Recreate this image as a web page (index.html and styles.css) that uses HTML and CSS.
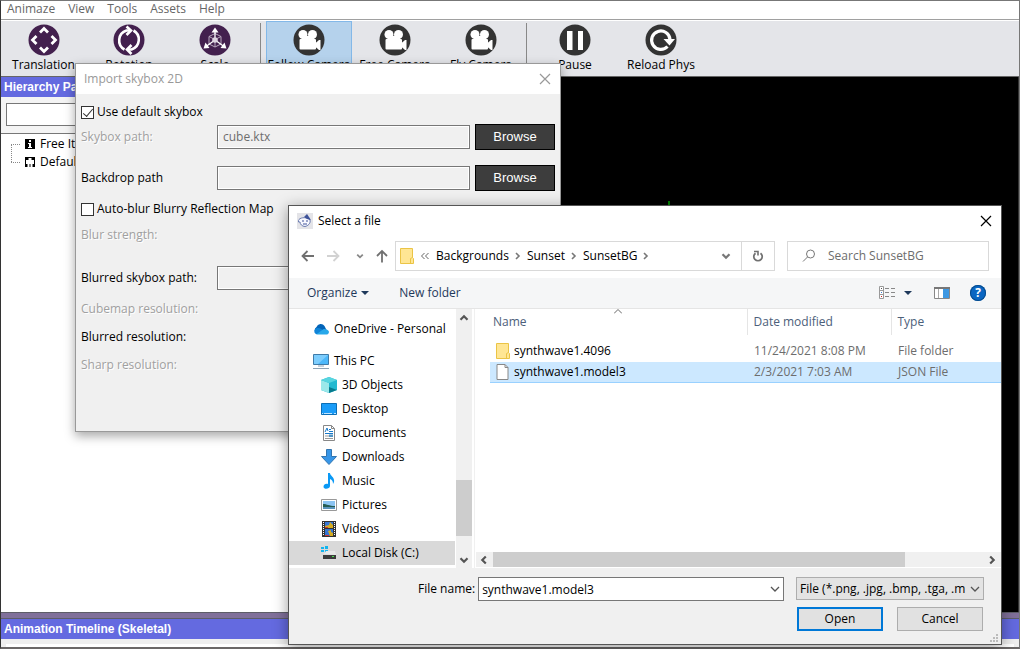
FILE: index.html
```html
<!DOCTYPE html>
<html lang="en">
<head>
<meta charset="utf-8">
<title>Animaze Editor</title>
<link rel="stylesheet" href="styles.css">
</head>
<body>
<svg class="defs" aria-hidden="true">
  <symbol id="camera" viewBox="0 0 32 32">
    <circle cx="16" cy="16" r="15.500" fill="#333"/>
    <circle cx="10" cy="10.500" r="4.500" fill="#fff"/><circle cx="19.500" cy="10.500" r="4.500" fill="#fff"/>
    <path d="M9 12h12v5H9z" fill="#fff"/><rect x="6.500" y="15" width="16.500" height="10.500" rx="1" fill="#fff"/>
    <path d="M22 19.500l4-3.500h1.500v10H26l-4-3.500z" fill="#fff"/>
  </symbol>
  <symbol id="folder" viewBox="0 0 14 18">
    <path d="M.5 1.500h12v9l1 1v5H.5z" fill="#ffe694" stroke="#ebc445"/><path d="M10.500 16.500v-5l2-1" fill="none" stroke="#ebc445"/>
  </symbol>
  <symbol id="chev-down" viewBox="0 0 10 10"><path d="M1 3l4 4 4-4" fill="none" stroke="currentColor" stroke-width="1.300"/></symbol>
  <symbol id="chev-bold" viewBox="0 0 10 10"><path d="M1.500 3.200l3.500 3.500 3.500-3.500" fill="none" stroke="currentColor" stroke-width="2.200"/></symbol>
  <symbol id="cross" viewBox="0 0 12 12"><path d="M1 1l10 10M11 1L1 11" fill="none" stroke="currentColor" stroke-width="1.200"/></symbol>
</svg>

<div class="app">
  <nav class="menubar">
    <button>Animaze</button><button>View</button><button>Tools</button><button>Assets</button><button>Help</button>
  </nav>
  <div class="toolbar">
    <button class="tool"><svg viewBox="0 0 32 32"><circle cx="16" cy="16" r="15.500" fill="#43204e"/><g fill="none" stroke="#fff" stroke-width="2.800"><path d="M12 8.500l4-4 4 4M12 23.500l4 4 4-4M8.500 12l-4 4 4 4M23.500 12l4 4-4 4"/></g></svg>Translation</button>
    <button class="tool"><svg viewBox="0 0 32 32"><circle cx="16" cy="16" r="15.500" fill="#43204e"/><g fill="none" stroke="#fff" stroke-width="2.600"><path d="M11.500 25.500A10.400 10.400 0 0 1 13.500 6.500h4M20.500 6.500A10.400 10.400 0 0 1 18.500 25.500h-4"/><path d="M13.500 2.500L18 6.500l-4.500 4.500M18.500 21L14 25.500l4.500 4.500"/></g></svg>Rotation</button>
    <button class="tool"><svg viewBox="0 0 32 32"><circle cx="16" cy="16" r="15.500" fill="#43204e"/><g fill="none" stroke="#b9a8be" stroke-width="1"><path d="M10 12.500l6-3 6 3v7.500l-6 3-6-3zM10 12.500l6 3 6-3M16 15v8"/></g><path d="M16 16V6M16 16L7 22.500M16 16l9 6.500" stroke="#fff" stroke-width="1.300"/><path d="M16 3.500l3.500 5h-7zM4.500 24.500l2-6 4 5.500zM27.500 24.500l-2-6-4 5.500z" fill="#fff"/><circle cx="16" cy="16" r="2.800" fill="#ddd3e0"/></svg>Scale</button>
    <span class="sep"></span>
    <button class="tool active"><svg><use href="#camera"/></svg>Follow Camera</button>
    <button class="tool"><svg><use href="#camera"/></svg>Free Camera</button>
    <button class="tool"><svg><use href="#camera"/></svg>Fly Camera</button>
    <span class="sep"></span>
    <button class="tool"><svg viewBox="0 0 32 32"><circle cx="16" cy="16" r="15.500" fill="#333"/><path d="M8 7h5.500v19H8zM19 7h5v19h-5z" fill="#fff"/></svg>Pause</button>
    <button class="tool"><svg viewBox="0 0 32 32"><circle cx="16" cy="16" r="15.500" fill="#333"/><path d="M22.500 22.500a9.200 9.200 0 1 1 2.500-7" fill="none" stroke="#fff" stroke-width="3.200"/><path d="M18.500 15h11.500l-5.500 6.500z" fill="#fff"/></svg>Reload Phys</button>
  </div>
  <div class="workspace">
    <section class="hierarchy">
      <h2 class="panel-title">Hierarchy Panel</h2>
      <div class="filter"><input type="text" aria-label="Filter hierarchy"></div>
      <ul class="tree">
        <li><svg viewBox="0 0 10 10"><path d="M0 0h10v10H0z"/><path d="M4 1h2v2H4zM3 4h3v4h1v1H3V8h1V5H3z" fill="#fff"/></svg>Free Items</li>
        <li><svg viewBox="0 0 10 10"><path d="M0 0h10v10H0z"/><path d="M3.500 1h3v2H9v4H7.500v3h-2V7h-1v3h-2V7H1V3h2.500z" fill="#fff"/></svg>Default</li>
      </ul>
    </section>
    <div class="viewport"><span class="axis"></span></div>
  </div>
  <div class="splitter"></div>
  <h2 class="panel-title">Animation Timeline (Skeletal)</h2>
  <div class="timeline"></div>
</div>

<section class="window import" aria-labelledby="import-title">
  <header class="titlebar"><span id="import-title">Import skybox 2D</span><button class="close" aria-label="Close"><svg><use href="#cross"/></svg></button></header>
  <form class="import-form">
    <label class="check"><input type="checkbox" checked>Use default skybox</label>
    <div class="field path"><label class="off" for="skybox">Skybox path:</label><input id="skybox" type="text" value="cube.ktx" readonly><button type="button">Browse</button></div>
    <div class="field path second"><label for="backdrop">Backdrop path</label><input id="backdrop" type="text" readonly><button type="button">Browse</button></div>
    <label class="check"><input type="checkbox">Auto-blur Blurry Reflection Map</label>
    <div class="field off blur">Blur strength:</div>
    <div class="field path"><label for="blurred">Blurred skybox path:</label><input id="blurred" type="text" readonly><button type="button">Browse</button></div>
    <div class="field off res">Cubemap resolution:</div>
    <div class="field res">Blurred resolution:</div>
    <div class="field off res">Sharp resolution:</div>
  </form>
</section>

<section class="window picker" aria-labelledby="picker-title">
  <header class="picker-title">
    <svg class="appicon" viewBox="0 0 16 16"><path d="M0 0h16v16H0z" fill="#e4e4e8"/><path d="M2 6.500C4 4 11 4 13 7c1 3-2 6-5 6.500C5 13.500 3 11 3 9H1.500V7.500z" fill="#f8f8ff" stroke="#6b7cb0"/><path d="M7 4l3-3 2 3 2 3-4-1z" fill="#3e5399"/><path d="M5 8h2M9 8h2M6 11h4" stroke="#3e5399"/></svg>
    <span id="picker-title">Select a file</span>
    <button class="close" aria-label="Close"><svg><use href="#cross"/></svg></button>
  </header>
  <div class="addressbar">
    <div class="arrows">
      <button aria-label="Back"><svg viewBox="0 0 14 12"><path d="M13 6H2M6.500 1L1.500 6l5 5" fill="none" stroke="#707070" stroke-width="1.800"/></svg></button>
      <button aria-label="Forward"><svg viewBox="0 0 14 12"><path d="M1 6h11M7.500 1l5 5-5 5" fill="none" stroke="#d2d2d2" stroke-width="1.800"/></svg></button>
      <button class="recent" aria-label="Recent locations"><svg><use href="#chev-bold"/></svg></button>
      <button aria-label="Up"><svg viewBox="0 0 14 14"><path d="M7 13.500V2M2 7l5-5 5 5" fill="none" stroke="#707070" stroke-width="1.800"/></svg></button>
    </div>
    <div class="crumbs">
      <svg class="folder"><use href="#folder"/></svg>
      <svg class="more" viewBox="0 0 10 8"><path d="M4.500 1L1.500 4l3 3M8.500 1l-3 3 3 3" fill="none" stroke="#666"/></svg>
      <button>Backgrounds</button><svg class="gt" viewBox="0 0 6 8"><path d="M1 1l3 3-3 3" fill="none" stroke="#777" stroke-width="1.600"/></svg>
      <button>Sunset</button><svg class="gt" viewBox="0 0 6 8"><path d="M1 1l3 3-3 3" fill="none" stroke="#777" stroke-width="1.600"/></svg>
      <button>SunsetBG</button><svg class="gt" viewBox="0 0 6 8"><path d="M1 1l3 3-3 3" fill="none" stroke="#777" stroke-width="1.600"/></svg>
      <button class="drop" aria-label="Previous locations"><svg><use href="#chev-bold"/></svg></button>
      <button class="refresh" aria-label="Refresh"><svg viewBox="0 0 12 12"><path d="M8.500 3.200a4.200 4.200 0 1 1-5 0" fill="none" stroke="#707070" stroke-width="1.700"/><path d="M2 1.500h4v4" fill="none" stroke="#707070" stroke-width="1.600"/></svg></button>
    </div>
    <label class="search"><svg viewBox="0 0 14 14"><circle cx="8.500" cy="5" r="4" fill="none" stroke="#777"/><path d="M5.500 8L1 12.500" stroke="#777"/></svg><input type="text" placeholder="Search SunsetBG" aria-label="Search SunsetBG"></label>
  </div>
  <div class="commands">
    <button>Organize <svg class="tri" viewBox="0 0 8 4"><path d="M0 0h8L4 4z" fill="#1e395b"/></svg></button>
    <button>New folder</button>
    <button class="view" aria-label="Change view"><svg class="listicon" viewBox="0 0 17 14"><path d="M.5.500h4v12h-4zM.5 4.500h4M.5 8.500h4" fill="#fff" stroke="#999"/><path d="M2 2h1v1H2z" fill="#555"/><path d="M2 6h1v1H2z" fill="#3a7bd5"/><path d="M2 10h1v1H2z" fill="#c22"/><path d="M6 2.500h4M12 2.500h4M6 6.500h4M12 6.500h4M6 10.500h4M12 10.500h4" stroke="#888"/></svg><svg class="tri" viewBox="0 0 8 4"><path d="M0 0h8L4 4z" fill="#1e395b"/></svg></button>
    <button class="pane" aria-label="Preview pane"><svg viewBox="0 0 16 12"><path d="M.5.500h15v11H.5z" fill="#fff" stroke="#888"/><path d="M0 0h16v2H0z" fill="#777"/><path d="M4.500 2v9" stroke="#aaa"/><path d="M9 2h6v9H9z" fill="#3d98e3"/></svg></button>
    <button class="help" aria-label="Help">?</button>
  </div>
  <div class="browser">
    <ul class="places">
      <li class="root"><svg viewBox="0 0 16 16"><path d="M4 13a4 4 0 0 1-.5-7A4.500 4.500 0 0 1 11.500 5l2 4z" fill="#0364b8"/><path d="M3 13a3.200 3.200 0 0 1 1-6c3-.5 6 2 8 3l-2 3z" fill="#1084d8"/><path d="M3 13.500l7-5c1-1 5-.5 6 2.200 0 2-1.500 2.800-3 2.800z" fill="#28a8ea"/></svg>OneDrive - Personal</li>
      <li class="root"><svg viewBox="0 0 16 16"><path d="M.5 1.500h15v10H.5z" fill="#4db8fa" stroke="#3f7ba8"/><path d="M1 2h14L5 11H1z" fill="#7dcdfd"/><path d="M5 13h6M0 15.500h16" stroke="#8ea3b5"/></svg>This PC</li>
      <li><svg viewBox="0 0 16 16"><path d="M0 3l8-3 8 3v10l-8 3-8-3z" fill="#22b9d0"/><path d="M0 3l8 3v10l-8-3z" fill="#9be8ea"/><path d="M0 3l8-3 8 3-8 3z" fill="#58d5df"/><path d="M8 10l8 3-8 3z" fill="#077b8e"/></svg>3D Objects</li>
      <li><svg viewBox="0 0 16 16"><path d="M.5 2.500h15v11H.5z" fill="#1a9cf8" stroke="#0d6fb5"/><path d="M1 12.500h1M3 12.500h8M13 12.500h2" stroke="#bfe4ff"/></svg>Desktop</li>
      <li><svg viewBox="0 0 16 16"><path d="M2.500.500h8l3 3v12h-11z" fill="#fff" stroke="#888"/><path d="M10.500.500v3h3" fill="none" stroke="#888"/><path d="M4 7l2-4 1 3M8 4.500h2M8 6.500h4M4 8.500h8" fill="none" stroke="#1979c9"/><path d="M4 11h4M4 13.500h8" stroke="#999"/><path d="M8 9.500h4V12H8z" fill="#5395c4"/></svg>Documents</li>
      <li><svg viewBox="0 0 16 16"><path d="M5.500.500h5v7h5L8 15.500.5 7.500h5z" fill="#3796e8" stroke="#3275b0"/></svg>Downloads</li>
      <li><svg viewBox="0 0 16 16"><path d="M7 0h2c0 3 5 4 4 9l-1 2c0-3-1-4-3-5v7c0 3-6 4-6.500 1C2.500 11 5 10.500 7 11z" fill="#0a99f5"/></svg>Music</li>
      <li><svg viewBox="0 0 16 16"><path d="M.5 2.500h15v11H.5z" fill="#fff" stroke="#999"/><path d="M2 4h12v8H2z" fill="#8cc4f2"/><path d="M2 7c4 0 6 2 12 2v1H2z" fill="#255c52"/><path d="M2 10h12v2H2z" fill="#5a93bb"/></svg>Pictures</li>
      <li><svg viewBox="0 0 16 16"><path d="M1 0h14v16H1z" fill="#333"/><path d="M4 1h8v6H4zM4 8h8v7H4z" fill="#3475d5"/><path d="M4 5l4-1 1-3 3 3v3H4zM7 10l3-1v2l2 1v3H9z" fill="#d6ac21"/><path d="M4 6h3v1H4zM4 14h4v1H4z" fill="#c33"/><path d="M2.500 1v14M13.500 1v14" stroke="#fff" stroke-dasharray="1 1"/></svg>Videos</li>
      <li class="selected"><svg viewBox="0 0 16 16"><path d="M0 2h3v2H0zM4 1h3v3H4zM0 5h3v2H0zM4 5h3v3H4z" fill="#12b5ef"/><path d="M3 9l2-3h9l1 4z" fill="#e8e8e8"/><path d="M2 10h13v4H2z" fill="#3b3b3b"/><path d="M11 11h2v1h-2z" fill="#4be24b"/></svg>Local Disk (C:)</li>
    </ul>
    <div class="vscroll"><svg class="up"><use href="#chev-bold"/></svg><span class="thumb"></span><svg><use href="#chev-bold"/></svg></div>
    <div class="files">
      <table>
        <thead><tr><th class="name">Name<svg class="sort" viewBox="0 0 8 5"><path d="M0 4.500l4-4 4 4" fill="none" stroke="#666"/></svg></th><th class="date">Date modified</th><th>Type</th></tr></thead>
        <tbody>
          <tr><td><div class="file"><svg><use href="#folder"/></svg>synthwave1.4096</div></td><td>11/24/2021 8:08 PM</td><td>File folder</td></tr>
          <tr class="selected"><td><div class="file"><svg viewBox="0 0 14 18"><path d="M1 1.500h8l3 3v12H1z" fill="#fff" stroke="#888"/><path d="M9 1.500v3h3" fill="none" stroke="#888"/></svg>synthwave1.model3</div></td><td>2/3/2021 7:03 AM</td><td>JSON File</td></tr>
        </tbody>
      </table>
      <div class="hscroll"><svg class="left"><use href="#chev-bold"/></svg><span class="track"><span class="thumb"></span></span><svg class="right"><use href="#chev-bold"/></svg></div>
    </div>
  </div>
  <footer class="picker-foot">
    <label class="fname" for="fname">File name:</label>
    <div class="combo"><input id="fname" type="text" value="synthwave1.model3"><svg><use href="#chev-down"/></svg></div>
    <div class="choices">
      <div class="combo type"><select aria-label="File type"><option>File (*.png, .jpg, .bmp, .tga, .model3)</option></select><svg><use href="#chev-down"/></svg></div>
      <div class="actions"><button class="primary">Open</button><button>Cancel</button></div>
    </div>
    <svg class="grip" viewBox="0 0 8 8"><path d="M6 0h2v2H6zM3 3h2v2H3zM6 3h2v2H6zM0 6h2v2H0zM3 6h2v2H3zM6 6h2v2H6z" fill="#bbb"/></svg>
  </footer>
</section>
</body>
</html>
```
FILE: styles.css
```css
* { box-sizing: border-box; }
body {
  margin: 0;
  height: 100vh;
  overflow: hidden;
  position: relative;
  font: 12px/16px "Open Sans", "Noto Sans", sans-serif;
  color: #000;
}
button, input, select { font: inherit; color: inherit; }
button { border: 0; background: none; padding: 0; white-space: nowrap; }
ul { list-style: none; margin: 0; padding: 0; }
svg { flex: none; display: block; }
.defs { position: absolute; width: 0; height: 0; }

/* main editor window */
.app {
  height: 100%;
  display: flex;
  flex-direction: column;
  border: 1px solid #777;
  border-left-color: #333;
  border-bottom: 2px solid #6b6868;
  background: #fff;
}
.menubar {
  display: flex;
  gap: 13px;
  height: 19px;
  padding: 0 6px 2px;
  color: #666;
  border-bottom: 1px solid #a0a0a0;
}
.toolbar {
  display: flex;
  height: 57px;
  background: #e4e5e9;
  border-top: 1px solid #fff;
  border-bottom: 1px solid #666;
}
.tool {
  width: 86px;
  display: flex;
  flex-direction: column;
  align-items: center;
  justify-content: flex-start;
  padding-top: 3px;
}
.tool:first-child { width: 85px; }
.tool svg { width: 32px; height: 32px; margin-bottom: 1px; }
.tool.active { background: #b5d2ec; box-shadow: inset 0 0 0 1px #83b8e8; }
.sep { width: 1px; margin: 2px 5px 0 2px; background: #888; }

.workspace { flex: 1; display: flex; min-height: 0; }
.hierarchy {
  width: 42%;
  display: flex;
  flex-direction: column;
  background: #fff;
}
.panel-title {
  margin: 0;
  height: 20px;
  padding-left: 3px;
  font: bold 12px/20px "Liberation Sans", Arial, sans-serif;
  color: #fff;
  background: #646ae0;
}
.filter { padding: 6px 5px 7px; background: #f4f4f4; border-bottom: 1px solid #777; }
.filter input { display: block; width: 100%; height: 23px; border: 1px solid #777; background: #fff; }
.tree {
  flex: 1;
  padding: 1px 0 0 23px;
  background: repeating-linear-gradient(#888 0 1px, #fff 1px 2px) 10px 11px / 1px 18px no-repeat;
}
.tree li {
  display: flex;
  align-items: center;
  gap: 5px;
  height: 18px;
  margin-left: -13px;
}
.tree li::before { content: ""; width: 9px; border-top: 1px dotted #888; }
.tree svg { width: 10px; height: 10px; }
.viewport { flex: 1; background: #000; position: relative; border-right: 1px solid #333; }
.axis { position: absolute; left: 239px; top: 124px; width: 2px; height: 8px; background: #008000; }
.splitter { height: 7px; background: #80709a; border: solid #5d5d68; border-width: 1px 0; }
.timeline { height: 8px; border: 5px solid #efefef; border-bottom: 0; background: #fff; }

/* floating windows */
.window {
  position: absolute;
  display: flex;
  flex-direction: column;
  background: #f0f0f0;
}
.close { margin-left: auto; color: #999; }
.close svg { width: 12px; height: 12px; }
.import {
  left: 75px;
  top: 63px;
  width: 486px;
  min-height: 369px;
  border: 1px solid #999;
  box-shadow: 0 4px 10px rgba(0, 0, 0, .35);
}
.titlebar {
  display: flex;
  align-items: center;
  height: 30px;
  padding: 0 9px 0 8px;
  color: #999;
  background: #fff;
}
.import-form { display: flex; flex-direction: column; padding: 10px 5px 0; }
.check { display: flex; align-items: center; gap: 3px; height: 16px; }
.check input {
  appearance: none;
  width: 13px;
  height: 13px;
  margin: 0;
  border: 1px solid #333;
  background: #fff;
  display: grid;
  place-items: center;
}
.check input:checked::before {
  content: "";
  width: 9px;
  height: 4px;
  margin-top: -2px;
  border: solid #333;
  border-width: 0 0 1px 1px;
  transform: rotate(-50deg);
}
.field { min-height: 16px; }
.path { display: flex; align-items: center; gap: 5px; height: 26px; margin-top: 4px; }
.path.second { margin: 15px 0 10px; }
.path label { width: 131px; }
.path input {
  flex: 1;
  min-width: 0;
  height: 24px;
  padding: 0 5px 2px;
  border: 1px solid #777;
  box-shadow: inset 0 0 0 1px #fff;
  background: #f0f0f0;
  color: #6d6d6d;
}
.path button {
  width: 80px;
  height: 26px;
  font: 13px/20px "Liberation Sans", Arial, sans-serif;
  color: #fff;
  background: #3d3d3d;
  border: 1px solid #000;
}
.off { color: #a0a0a0; text-shadow: 1px 1px #fff; }
.blur { margin: 10px 0 18px; }
.res { margin-top: 12px; }
.import-form .path + .res { margin-top: 10px; }

.picker {
  left: 288px;
  top: 205px;
  width: 714px;
  height: 440px;
  background: #fff;
  border: 1px solid #555;
  box-shadow: 0 3px 14px rgba(0, 0, 0, .4);
}
.picker-title { display: flex; align-items: center; gap: 5px; height: 29px; padding: 0 9px 0 8px; }
.picker-title .close { color: #000; }
.appicon { width: 16px; height: 16px; }
.addressbar { display: flex; height: 30px; margin: 6px 12px 7px; }
.arrows { display: flex; align-items: center; justify-content: space-between; width: 88px; margin-right: 6px; }
.arrows svg { width: 14px; height: 14px; }
.arrows .recent { margin-left: 6px; }
.arrows .recent svg { width: 8px; height: 8px; color: #888; }
.crumbs { flex: 1; display: flex; align-items: center; gap: 6px; padding-left: 4px; border: 1px solid #d9d9d9; }
.folder { width: 14px; height: 18px; }
.more { width: 10px; height: 8px; }
.gt { width: 6px; height: 8px; }
.crumbs .drop { margin: 0 4px 0 auto; color: #777; }
.drop svg { width: 10px; height: 10px; }
.refresh { display: grid; place-items: center; width: 33px; height: 100%; border-left: 1px solid #d9d9d9; }
.refresh svg { width: 12px; height: 12px; }
.search { display: flex; align-items: center; gap: 12px; width: 202px; margin-left: 12px; padding: 0 14px; border: 1px solid #d9d9d9; }
.search svg { width: 14px; height: 14px; }
.search input { flex: 1; min-width: 0; border: 0; padding: 0; outline: 0; }
.search input::placeholder { color: #6d6d6d; opacity: 1; }
.commands {
  display: flex;
  align-items: center;
  gap: 30px;
  height: 31px;
  padding: 0 15px 0 18px;
  color: #1e395b;
  background: #f5f6f7;
  border-bottom: 1px solid #e5e5e5;
}
.commands button { display: flex; align-items: center; gap: 4px; }
.tri { width: 8px; height: 4px; }
.commands .view { margin-left: auto; gap: 8px; margin-right: -8px; }
.listicon { width: 17px; height: 14px; }
.pane { margin-right: -10px; }
.pane svg { width: 16px; height: 12px; }
.commands .help {
  justify-content: center;
  width: 16px;
  height: 16px;
  border-radius: 50%;
  font-weight: bold;
  color: #fff;
  background: #0a66c2;
  box-shadow: inset 0 0 0 1px #064b8c;
}

.browser { flex: 1; min-height: 0; display: flex; }
.places { width: 166px; padding-top: 8px; overflow: hidden; white-space: nowrap; }
.places li { display: flex; align-items: center; gap: 5px; height: 24px; padding-left: 32px; }
.places .root { padding-left: 24px; }
.places .root + .root { margin-top: 8px; }
.places svg { width: 16px; height: 16px; }
.places .selected { background: #d9d9d9; }
.vscroll {
  display: flex;
  flex-direction: column;
  align-items: center;
  width: 16px;
  margin-left: 1px;
  padding: 4px 0 3px;
  color: #555;
  background: #f0f0f0;
}
.vscroll svg, .hscroll svg { width: 10px; height: 10px; }
.up { transform: rotate(180deg); }
.vscroll .thumb { width: 100%; height: 56px; margin: auto 0 19px; background: #cdcdcd; }
.files {
  flex: 1;
  display: flex;
  flex-direction: column;
  justify-content: space-between;
  margin-left: 2px;
  border-left: 1px solid #f0f0f0;
  padding-left: 1px;
}
.files table { margin-left: 14px; border-collapse: collapse; table-layout: fixed; color: #6d6d6d; }
.files th { height: 26px; padding: 0 6px; font-weight: normal; text-align: left; color: #4c607a; border-left: 1px solid #e5e5e5; }
.files .name { width: 257px; padding-left: 3px; border: 0; position: relative; }
.files .date { width: 144px; }
.sort { position: absolute; left: 124px; top: 0; width: 8px; height: 5px; }
.files tbody::before { content: ""; display: block; height: 5px; }
.files td { height: 21px; padding: 0 7px; border: solid transparent; border-width: 1px 0; }
.files td:first-child { padding-left: 6px; }
.files .selected td { background: #cce8ff; border-color: #99d1ff; }
.file { display: flex; align-items: center; gap: 4px; color: #000; }
.file svg { width: 14px; height: 18px; }
.hscroll { display: flex; align-items: center; height: 15px; margin-bottom: 1px; padding: 0 4px 0 3px; color: #555; background: #f0f0f0; }
.left { transform: rotate(90deg); }
.right { transform: rotate(-90deg); }
.track { flex: 1; height: 100%; padding: 0 82px 0 4px; }
.track .thumb { display: block; height: 100%; background: #cdcdcd; }

.picker-foot {
  position: relative;
  display: flex;
  align-items: flex-start;
  height: 76px;
  padding: 9px 17px 0 129px;
  background: #f0f0f0;
}
.fname { padding-top: 4px; margin-right: 3px; white-space: nowrap; }
.combo { position: relative; flex: 1; height: 24px; }
.combo input, .combo select { width: 100%; height: 100%; padding: 0 3px; border: 1px solid #777; outline: 0; background: #fff; appearance: none; border-radius: 0; }
.combo select { padding-right: 18px; background: #e3e3e3; border-color: #adadad; }
.combo svg { position: absolute; right: 4px; top: 7px; width: 10px; height: 10px; color: #555; pointer-events: none; }
.choices { width: 188px; margin-left: 12px; }
.choices .combo { height: 23px; }
.actions { display: flex; justify-content: space-between; padding: 7px 1px; }
.actions button { width: 86px; height: 24px; background: #e1e1e1; border: 1px solid #adadad; }
.actions .primary { border: 2px solid #0078d7; }
.grip { position: absolute; right: 3px; bottom: 2px; width: 8px; height: 8px; }
```
